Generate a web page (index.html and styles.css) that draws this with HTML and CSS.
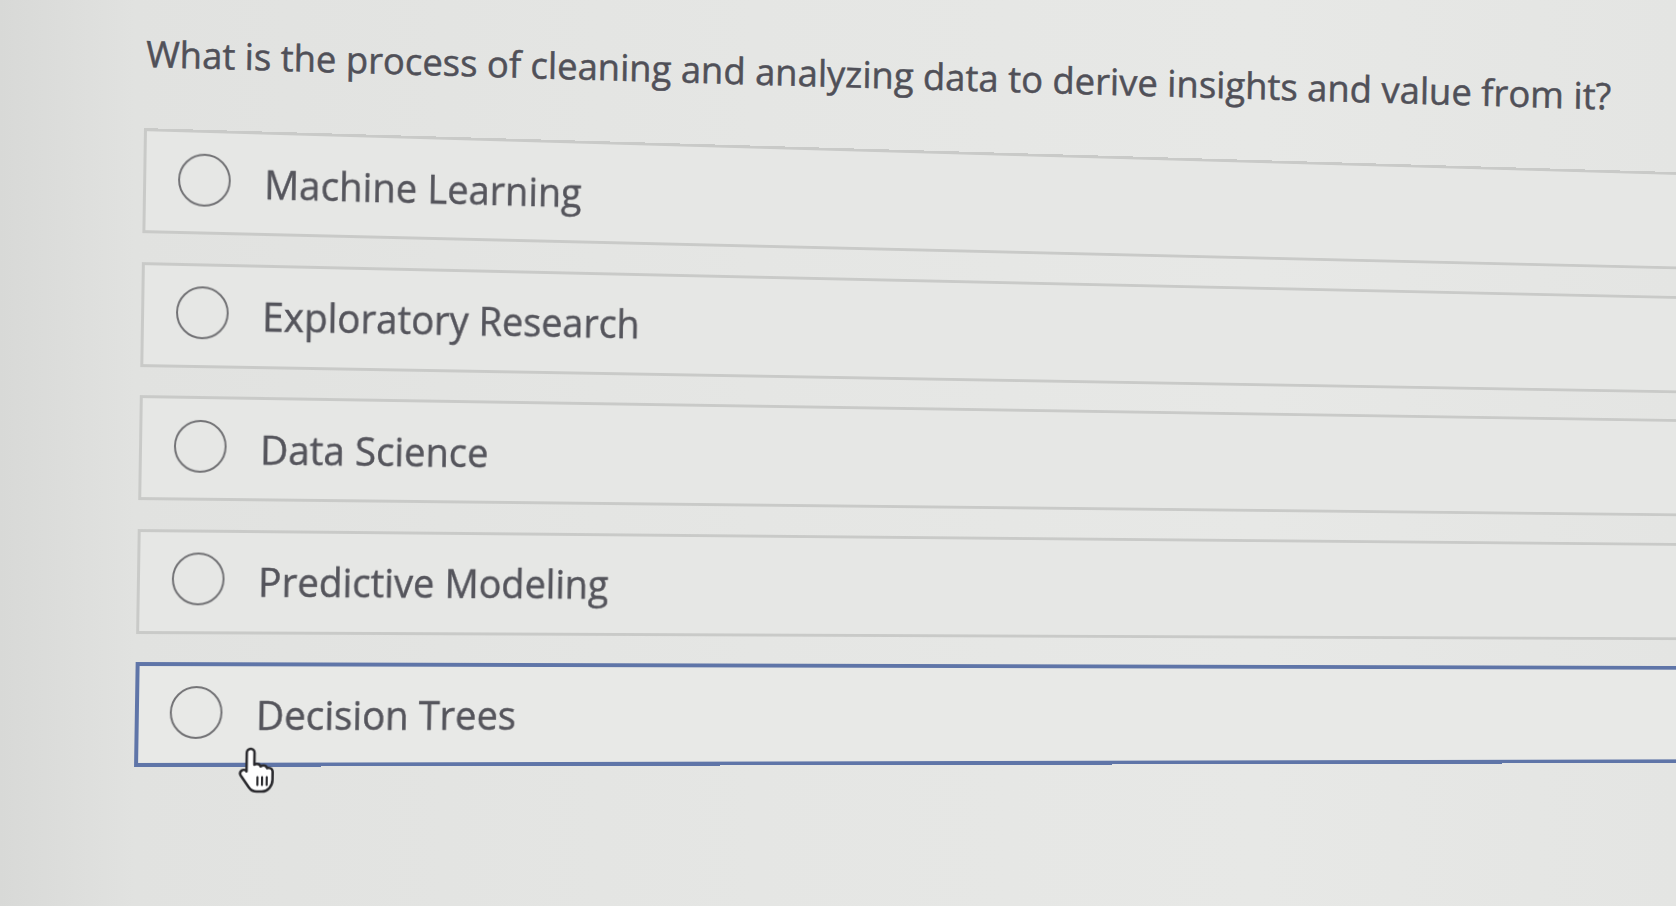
FILE: index.html
```html
<!DOCTYPE html>
<html lang="en">
<head>
<meta charset="utf-8">
<title>Quiz question</title>
<link rel="stylesheet" href="styles.css">
</head>
<body>
<main class="page">
  <h1 class="question">What is the process of cleaning and analyzing data to derive insights and value from it?</h1>
  <div class="options">
    <label class="option">
      <span class="radio"></span>
      <span class="option-text">Machine Learning</span>
    </label>
    <label class="option">
      <span class="radio"></span>
      <span class="option-text">Exploratory Research</span>
    </label>
    <label class="option">
      <span class="radio"></span>
      <span class="option-text">Data Science</span>
    </label>
    <label class="option">
      <span class="radio"></span>
      <span class="option-text">Predictive Modeling</span>
    </label>
    <label class="option option-focus">
      <span class="radio"></span>
      <span class="option-text">Decision Trees</span>
      <svg class="cursor" viewBox="0 0 20 24" aria-hidden="true">
        <path d="M6.5 1 C7.6 1 8.5 1.9 8.5 3 V9.2 C8.9 8.9 9.4 8.8 9.9 8.8 C10.8 8.8 11.5 9.3 11.8 10.1 C12.2 9.8 12.7 9.6 13.2 9.6 C14.1 9.6 14.9 10.2 15.1 11 C15.4 10.9 15.7 10.8 16 10.8 C17.1 10.8 18 11.7 18 12.8 V17 C18 20.3 15.6 23 12.5 23 H10 C8.3 23 6.8 22.2 5.8 20.8 L1.6 14.8 C1 13.9 1.2 12.8 2 12.2 C2.8 11.6 3.9 11.8 4.5 12.6 V3 C4.5 1.9 5.4 1 6.5 1 Z" fill="#ffffff" stroke="#2a2a2e" stroke-width="1.3" stroke-linejoin="round"/>
        <path d="M10.2 15.6 V19.6 M12.6 15.6 V19.6 M15 15.6 V19.6" stroke="#2a2a2e" stroke-width="1.1" stroke-linecap="round" fill="none"/>
      </svg>
    </label>
  </div>
</main>
</body>
</html>
```

FILE: styles.css
```css
html, body {
  margin: 0;
  padding: 0;
  overflow: hidden;
}

body {
  width: 1676px;
  height: 906px;
  background: linear-gradient(90deg, #d8d9d7 0%, #e1e2e0 8%, #e5e6e4 45%, #e7e8e6 75%, #e4e5e3 100%);
  font-family: "Open Sans", "DejaVu Sans", sans-serif;
}

.page {
  position: relative;
  height: 906px;
  padding-top: 29px;
  box-sizing: border-box;
}

.question {
  margin: 0 0 51px 146px;
  width: 1600px;
  font-size: 36.4px;
  line-height: 48px;
  font-weight: 400;
  color: #505058;
  -webkit-text-stroke: 0.5px #505058;
  white-space: nowrap;
  transform-origin: 0 38px;
  transform: matrix(1, 0.029, -0.0156, 1, 0, 0);
}

.options {
  width: 1900px;
  display: flex;
  flex-direction: column;
  gap: 28.5px;
  transform-origin: 0 0;
  transform: matrix3d(1.013335, 0.028902, 0, 0.000049237, -0.015708, 1.006893, 0, 0, 0, 0, 1, 0, -0.90192, -4.04628, 0, 1);
}

.option {
  position: relative;
  box-sizing: border-box;
  margin-left: 144px;
  width: 1756px;
  height: 105px;
  display: flex;
  align-items: center;
  padding-left: 32px;
  border: 3px solid #c9cac8;
  background: #e6e7e5;
}

.option-focus {
  border: 4px solid #5f75a8;
  padding-left: 31px;
  background: #e8e9e7;
}

.radio {
  flex: none;
  width: 53px;
  height: 53px;
  box-sizing: border-box;
  border: 2.6px solid #727275;
  border-radius: 50%;
  margin-bottom: 5px;
}

.option-text {
  margin-left: 34px;
  font-size: 39.3px;
  font-weight: 400;
  color: #55555c;
  -webkit-text-stroke: 0.45px #55555c;
  white-space: nowrap;
}

.cursor {
  position: absolute;
  left: 100px;
  top: 81px;
  width: 40px;
  height: 47px;
}
```
